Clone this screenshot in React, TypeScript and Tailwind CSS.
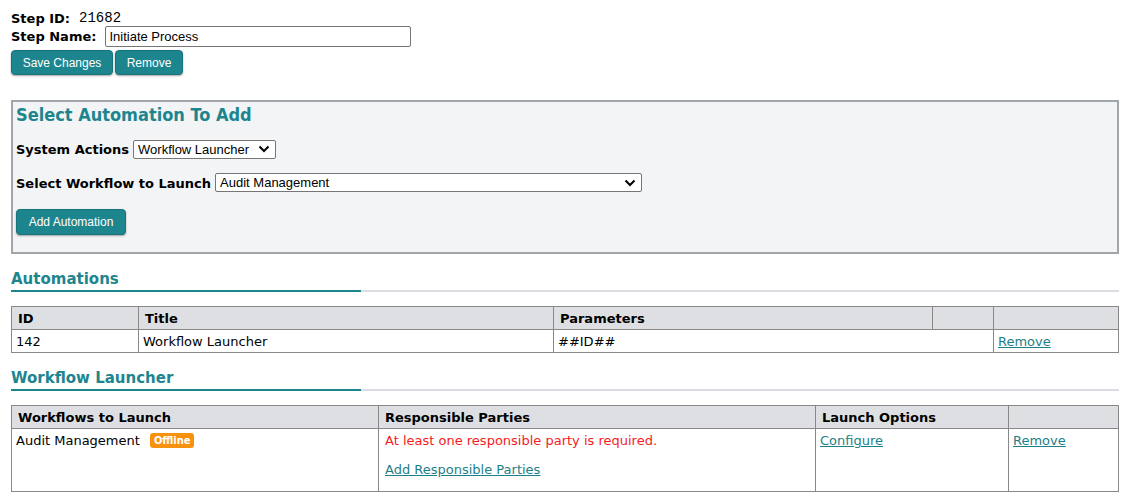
import React from "react";

const teal = "bg-[#1d858e]";

function Chevron() {
  return (
    <svg width="12" height="8" viewBox="0 0 12 8" className="shrink-0">
      <path d="M1.5 1.5 L6 6 L10.5 1.5" fill="none" stroke="#000" strokeWidth="2" />
    </svg>
  );
}

function FakeSelect({ value, width }: { value: string; width: string }) {
  return (
    <div
      className={`${width} h-[19px] bg-white border border-[#767676] rounded-[2px] flex items-center justify-between pl-[4px] pr-[5px] text-[13px] font-['Liberation_Sans',Arial,sans-serif] text-black`}
    >
      <span className="leading-none">{value}</span>
      <Chevron />
    </div>
  );
}

function Btn({ children, className = "" }: { children: React.ReactNode; className?: string }) {
  return (
    <button
      className={`${teal} text-white text-[12px] font-['Liberation_Sans',Arial,sans-serif] rounded-[4px] shadow-[0_1px_2px_rgba(0,0,0,0.35)] border border-[#17737b] ${className}`}
    >
      {children}
    </button>
  );
}

function SectionHeading({ children }: { children: React.ReactNode }) {
  return (
    <div className="mt-[16px]">
      <div className="text-[15px] font-bold text-[#1d858e] leading-[18px] pb-[2px]">{children}</div>
      <div className="flex h-[2px]">
        <div className="w-[350px] bg-[#1d858e]" />
        <div className="flex-1 bg-[#dcdde3]" />
      </div>
    </div>
  );
}

const th = "border border-[#888] text-left font-bold px-[6px] pt-[1px] h-[23px] text-[13px]";
const td = "border border-[#888] px-[4px] align-top text-[13px]";
const td1 = "border border-[#888] px-[4px] pt-[1px] align-middle text-[13px]";
const link = "text-[#1d7f88] underline";

export default function App() {
  return (
    <div className="min-h-[501px] bg-white text-black pl-[11px] pr-[15px] pt-[9px] font-['DejaVu_Sans',Verdana,sans-serif]">
      <div className="text-[13px] leading-[17px] flex items-center pt-[1px] h-[17px]">
        <span className="font-bold">Step ID:</span>
        <span className="ml-[9px] font-['Liberation_Mono',monospace] text-[14px]">21682</span>
      </div>
      <div className="flex items-center text-[13px]">
        <span className="font-bold">Step Name:</span>
        <div className="ml-[9px] w-[306px] h-[21px] border border-[#767676] rounded-[2px] flex items-center px-[3px] font-['Liberation_Sans',Arial,sans-serif] text-[13px]">
          Initiate Process
        </div>
      </div>
      <div className="flex gap-[2px] mt-[3px]">
        <Btn className="w-[102px] h-[25px]">Save Changes</Btn>
        <Btn className="w-[68px] h-[25px]">Remove</Btn>
      </div>

      <div className="mt-[25px] border-2 border-[#a2a6ab] bg-[#f3f4f6] px-[3px] pt-[2px] h-[154px]">
        <div className="text-[18px] font-bold text-[#1d858e] leading-[22px] font-['DejaVu_Sans_Condensed','DejaVu_Sans',sans-serif]">
          Select Automation To Add
        </div>
        <div className="flex items-center mt-[13px] text-[13px]">
          <span className="font-bold mr-[4px] pt-[1px]">System Actions</span>
          <FakeSelect value="Workflow Launcher" width="w-[143px]" />
        </div>
        <div className="flex items-center mt-[13px] text-[13px]">
          <span className="font-bold mr-[4px] pt-[1px]">Select Workflow to Launch</span>
          <FakeSelect value="Audit Management" width="w-[427px]" />
        </div>
        <Btn className="mt-[16px] w-[110px] h-[26px]">Add Automation</Btn>
      </div>

      <SectionHeading>Automations</SectionHeading>
      <table className="mt-[14px] w-full border-collapse border border-[#888]">
        <thead>
          <tr className="bg-[#dddfe2]">
            <th className={`${th} w-[127px]`}>ID</th>
            <th className={`${th} w-[415px]`}>Title</th>
            <th className={`${th} w-[379px]`}>Parameters</th>
            <th className={`${th} w-[61px]`}></th>
            <th className={th}></th>
          </tr>
        </thead>
        <tbody>
          <tr className="h-[23px]">
            <td className={td1}>142</td>
            <td className={td1}>Workflow Launcher</td>
            <td className={td1} colSpan={2}>##ID##</td>
            <td className={td1}>
              <a className={link}>Remove</a>
            </td>
          </tr>
        </tbody>
      </table>

      <SectionHeading>Workflow Launcher</SectionHeading>
      <table className="mt-[14px] w-full border-collapse border border-[#888]">
        <thead>
          <tr className="bg-[#dddfe2]">
            <th className={`${th} w-[367px]`}>Workflows to Launch</th>
            <th className={`${th} w-[437px]`}>Responsible Parties</th>
            <th className={`${th} w-[193px]`}>Launch Options</th>
            <th className={th}></th>
          </tr>
        </thead>
        <tbody>
          <tr className="h-[63px]">
            <td className={`${td} pt-[2px]`}>
              <span>Audit Management</span>
              <span className="ml-[10px] inline-block bg-[#f7920f] text-white text-[11px] font-bold rounded-[3px] px-[4px] leading-[15px] align-[1px] font-['DejaVu_Sans_Condensed','DejaVu_Sans',sans-serif]">
                Offline
              </span>
            </td>
            <td className={`${td} pt-[2px]`}>
              <div className="text-[#f51c1c] pl-[2px]">At least one responsible party is required.</div>
              <div className="mt-[9px] pl-[2px]">
                <a className={link}>Add Responsible Parties</a>
              </div>
            </td>
            <td className={`${td} pt-[2px]`}>
              <a className={link}>Configure</a>
            </td>
            <td className={`${td} pt-[2px]`}>
              <a className={link}>Remove</a>
            </td>
          </tr>
        </tbody>
      </table>
    </div>
  );
}
